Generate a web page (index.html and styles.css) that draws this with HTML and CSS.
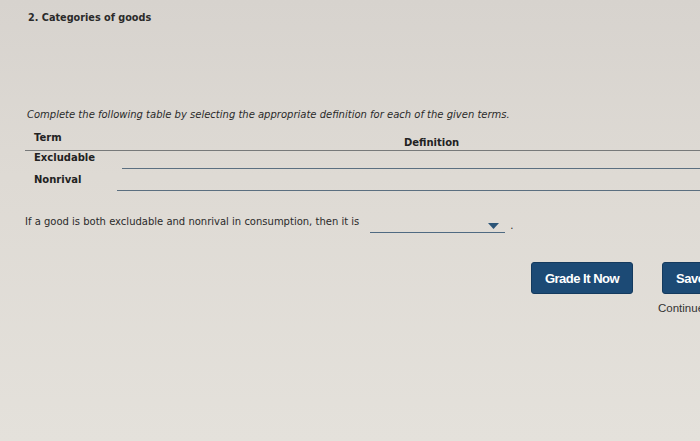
FILE: index.html
```
<!DOCTYPE html>
<html>
<head>
<meta charset="utf-8">
<link rel="stylesheet" href="styles.css">
</head>
<body>
<div class="page">
  <h2 class="title">2. Categories of goods</h2>
  <p class="instr">Complete the following table by selecting the appropriate definition for each of the given terms.</p>
  <div class="table">
    <div class="thead">
      <div class="th-term">Term</div>
      <div class="th-def">Definition</div>
    </div>
    <div class="row">
      <div class="term">Excludable</div>
      <div class="select s1"></div>
    </div>
    <div class="row">
      <div class="term">Nonrival</div>
      <div class="select s2"></div>
    </div>
  </div>
  <div class="sentence">
    <span>If a good is both excludable and nonrival in consumption, then it is</span>
    <span class="dd"><svg class="arrow" width="11" height="7" viewBox="0 0 11 7"><path d="M0 0 L11 0 L5.5 6 Z" fill="#2c5578"/></svg></span>
    <span class="dot">.</span>
  </div>
  <div class="actions">
    <div class="btnwrap">
      <button class="btn">Grade It Now</button>
    </div>
    <div class="btnwrap save">
      <button class="btn">Save &amp; Continue</button>
      <div class="cont">Continue without saving</div>
    </div>
  </div>
</div>
</body>
</html>
```
FILE: styles.css
```
html, body {
  margin: 0;
  padding: 0;
}
body {
  width: 700px;
  height: 441px;
  overflow: hidden;
  background: linear-gradient(180deg, #d7d3ce 0%, #dedad4 40%, #e4e1db 100%);
  font-family: "DejaVu Sans", Verdana, sans-serif;
  color: #222;
}
.page {
  padding: 12px 0 0 28px;
}
.title {
  margin: 0;
  font-size: 9.7px;
  font-weight: bold;
  color: #2a2a2a;
}
.instr {
  margin: 86px 0 0 -1px;
  font-size: 10px;
  font-style: italic;
  color: #2a2a2a;
}
.table {
  margin-top: 12px;
  margin-left: -3px;
}
.thead {
  display: flex;
  align-items: flex-start;
  border-bottom: 1.5px solid #77797a;
  height: 19px;
  box-sizing: border-box;
  font-size: 10px;
  font-weight: bold;
}
.th-term {
  padding-left: 9px;
  width: 370px;
}
.th-def {
  padding-top: 5px;
}
.row {
  display: flex;
  align-items: flex-start;
  height: 22px;
  font-size: 10px;
  font-weight: bold;
}
.term {
  padding-left: 9px;
  padding-top: 1px;
}
.select {
  flex: 1;
  border-bottom: 1.5px solid #5b6f80;
  height: 17px;
}
.s1 { margin-left: 27px; }
.s2 { margin-left: 36px; height: 17px; }
.sentence {
  margin-top: 21px;
  margin-left: -3px;
  display: flex;
  align-items: flex-start;
  font-size: 10px;
  color: #2a2a2a;
}
.dd {
  position: relative;
  display: inline-block;
  width: 135px;
  height: 16px;
  margin-left: 11px;
  border-bottom: 1.5px solid #4f6a82;
}
.arrow {
  position: absolute;
  right: 6px;
  top: 7px;
}
.dot {
  margin-left: 5px;
  padding-top: 4px;
}
.actions {
  display: flex;
  margin-top: 29px;
  margin-left: 503px;
  gap: 29px;
}
.btnwrap {
  display: flex;
  flex-direction: column;
}
.btn {
  background: #1c4a75;
  color: #fff;
  border: 1px solid #143a5e;
  border-radius: 3px;
  font-family: "Liberation Sans", Arial, sans-serif;
  font-weight: bold;
  font-size: 13px;
  height: 32px;
  padding: 0 12px;
  letter-spacing: -0.5px;
  white-space: nowrap;
}
.btnwrap:first-child .btn {
  width: 102px;
}
.save .btn {
  text-align: left;
  padding-left: 13px;
  width: 130px;
}
.cont {
  margin-top: 8px;
  margin-left: -4px;
  font-family: "Liberation Sans", Arial, sans-serif;
  font-size: 11.5px;
  color: #333;
  white-space: nowrap;
}
```
